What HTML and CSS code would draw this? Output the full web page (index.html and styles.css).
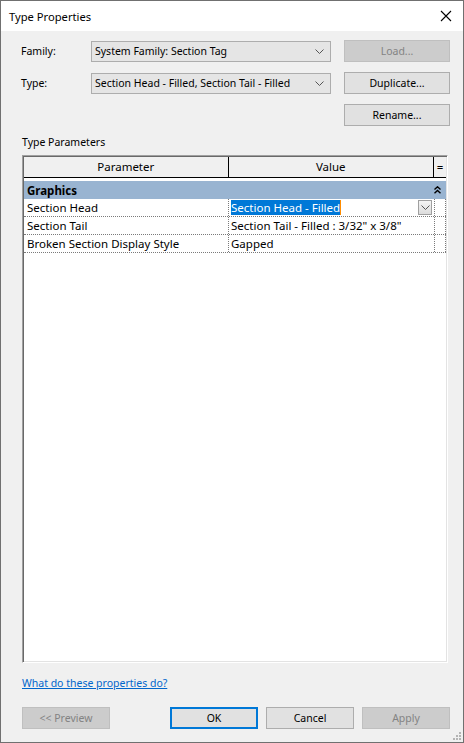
FILE: index.html
```html
<!DOCTYPE html>
<html>
<head>
<meta charset="utf-8">
<link rel="stylesheet" href="styles.css">
</head>
<body>
<div class="window">
  <div class="titlebar">
    <span class="title">Type Properties</span>
    <svg class="close" width="12" height="12" viewBox="0 0 12 12"><path d="M1 1L11 11M11 1L1 11" stroke="#000" stroke-width="1.1"/></svg>
  </div>
  <div class="content">
    <div class="top">
      <div class="label">Family:</div>
      <div class="combo"><span>System Family: Section Tag</span><svg class="chev" width="9" height="5" viewBox="0 0 9 5"><path d="M0.5 0.5L4.5 4.5L8.5 0.5" fill="none" stroke="#555" stroke-width="1"/></svg></div>
      <button class="btn disabled">Load...</button>
      <div class="label">Type:</div>
      <div class="combo"><span>Section Head - Filled, Section Tail - Filled</span><svg class="chev" width="9" height="5" viewBox="0 0 9 5"><path d="M0.5 0.5L4.5 4.5L8.5 0.5" fill="none" stroke="#555" stroke-width="1"/></svg></div>
      <button class="btn">Duplicate...</button>
      <div></div>
      <div></div>
      <button class="btn">Rename...</button>
    </div>
    <div class="section-label">Type Parameters</div>
    <div class="grid">
      <div class="ghead">
        <div class="hc c1">Parameter</div>
        <div class="hc c2">Value</div>
        <div class="hc c3">=</div>
      </div>
      <div class="group">
        <span>Graphics</span>
        <svg class="collapse" width="7" height="8" viewBox="0 0 7 8"><path d="M0.5 3.5L3.5 0.8L6.5 3.5M0.5 7.2L3.5 4.5L6.5 7.2" fill="none" stroke="#000" stroke-width="1.4"/></svg>
      </div>
      <div class="row">
        <div class="cell c1">Section Head</div>
        <div class="cell c2"><span class="sel">Section Head - Filled</span><span class="caret"></span><span class="ddbtn"><svg width="9" height="5" viewBox="0 0 9 5"><path d="M0.5 0.5L4.5 4.5L8.5 0.5" fill="none" stroke="#555" stroke-width="1"/></svg></span></div>
        <div class="cell c3"></div>
      </div>
      <div class="row">
        <div class="cell c1">Section Tail</div>
        <div class="cell c2">Section Tail - Filled : 3/32" x 3/8"</div>
        <div class="cell c3"></div>
      </div>
      <div class="row">
        <div class="cell c1">Broken Section Display Style</div>
        <div class="cell c2">Gapped</div>
        <div class="cell c3"></div>
      </div>
    </div>
    <a class="help" href="#">What do these properties do?</a>
    <div class="buttons">
      <button class="btn bb disabled">&lt;&lt; Preview</button>
      <div class="spacer"></div>
      <button class="btn bb default">OK</button>
      <button class="btn bb">Cancel</button>
      <button class="btn bb disabled">Apply</button>
    </div>
  </div>
  <svg class="grip" width="10" height="10" viewBox="0 0 10 10"><g fill="#b4b4b4"><rect x="7" y="1" width="2" height="2"/><rect x="4" y="4" width="2" height="2"/><rect x="7" y="4" width="2" height="2"/><rect x="1" y="7" width="2" height="2"/><rect x="4" y="7" width="2" height="2"/><rect x="7" y="7" width="2" height="2"/></g></svg>
</div>
</body>
</html>
```

FILE: styles.css
```css
html, body {
  margin: 0;
  padding: 0;
  background: #f0f0f0;
}
body {
  font-family: "Noto Sans", "Open Sans", sans-serif;
  font-size: 10.5px;
  color: #000;
}
.window {
  width: 464px;
  height: 743px;
  box-sizing: border-box;
  border: 1px solid #707070;
  background: #f0f0f0;
  display: flex;
  flex-direction: column;
  position: relative;
}
.titlebar {
  height: 30px;
  background: #fff;
  display: flex;
  align-items: center;
  padding-left: 8px;
  padding-right: 11px;
  font-size: 11.2px;
}
.title {
  flex: 1;
}
.content {
  padding: 9px 13px 0 20px;
  display: flex;
  flex-direction: column;
  flex: 1;
}
.top {
  display: grid;
  grid-template-columns: 70px 240px 1fr;
  column-gap: 0;
  grid-template-rows: 22px 22px 22px;
  row-gap: 10px;
  align-items: center;
}
.top .btn {
  margin-left: 13px;
}
.combo {
  height: 21px;
  box-sizing: border-box;
  border: 1px solid #adadad;
  background: #e5e5e5;
  display: flex;
  align-items: center;
  padding: 0 5px 0 3px;
}
.combo span {
  flex: 1;
  white-space: nowrap;
}
.chev {
  margin-right: 1px;
}
.btn {
  font-family: inherit;
  font-size: 10.5px;
  color: #000;
  height: 22px;
  box-sizing: border-box;
  border: 1px solid #adadad;
  background: #e1e1e1;
  padding: 0;
  margin: 0;
}
.btn.disabled {
  color: #838383;
  background: #cccccc;
  border-color: #bfbfbf;
}
.btn.default {
  border: 2px solid #0078d7;
}
.section-label {
  margin-top: 9px;
  padding-left: 1px;
  height: 20px;
  line-height: 14px;
}
.grid {
  margin-left: 1px;
  width: 426px;
  height: 508px;
  box-sizing: border-box;
  background: #fff;
  border-top: 1px solid #a0a0a0;
  border-left: 1px solid #a0a0a0;
  border-right: 1px solid #fff;
  border-bottom: 1px solid #fff;
  box-shadow: inset 1px 1px 0 #696969, inset -1px -1px 0 #e3e3e3;
  padding: 0 1px 0 1px;
  font-size: 11.5px;
}
.ghead {
  display: flex;
  height: 22px;
  box-sizing: border-box;
  border-bottom: 1px solid #000;
  border-top: 1px solid #696969;
  background: #f0f0f0;
}
.hc {
  display: flex;
  align-items: center;
  justify-content: center;
  padding-bottom: 1px;
}
.c1 { width: 205px; box-sizing: border-box; }
.c2 { width: 206px; box-sizing: border-box; }
.c3 { width: 12px; box-sizing: border-box; }
.ghead .c1 { border-right: 1px solid #000; }
.ghead .c2 { border-right: 1px solid #000; }
.group {
  margin-top: 3px;
  height: 18px;
  background: #99b4d1;
  display: flex;
  align-items: center;
  padding-left: 3px;
  font-weight: bold;
}
.group span { flex: 1; }
.collapse { margin-right: 5px; }
.row {
  display: flex;
  height: 17px;
  border-bottom: 1px dotted #7a7a7a;
}
.cell {
  display: flex;
  align-items: center;
  white-space: nowrap;
  overflow: hidden;
}
.row .c1 { padding-left: 3px; border-right: 1px dotted #7a7a7a; }
.row .c2 { padding-left: 2px; border-right: 1px dotted #7a7a7a; position: relative; }
.row .c3 { border-right: 1px dotted #7a7a7a; width: 11px; }
.sel {
  background: #0078d7;
  color: #fff;
  height: 15px;
  line-height: 15px;
}
.caret {
  width: 1px;
  height: 15px;
  background: #ff8c00;
}
.ddbtn {
  position: absolute;
  right: 2px;
  top: 1px;
  width: 14px;
  height: 15px;
  box-sizing: border-box;
  border: 1px solid #a0a0a0;
  background: linear-gradient(#f4f4f4, #dcdcdc);
  display: flex;
  align-items: center;
  justify-content: center;
}
.help {
  margin-top: 13px;
  margin-left: 1px;
  color: #0066cc;
  text-decoration: underline;
  height: 14px;
  line-height: 14px;
  align-self: flex-start;
}
.buttons {
  margin-top: 17px;
  display: flex;
  gap: 8px;
  margin-left: 1px;
}
.bb { width: 88px; height: 22px; }
.spacer { width: 44px; }
.grip {
  position: absolute;
  right: 1px;
  bottom: 1px;
}
```
